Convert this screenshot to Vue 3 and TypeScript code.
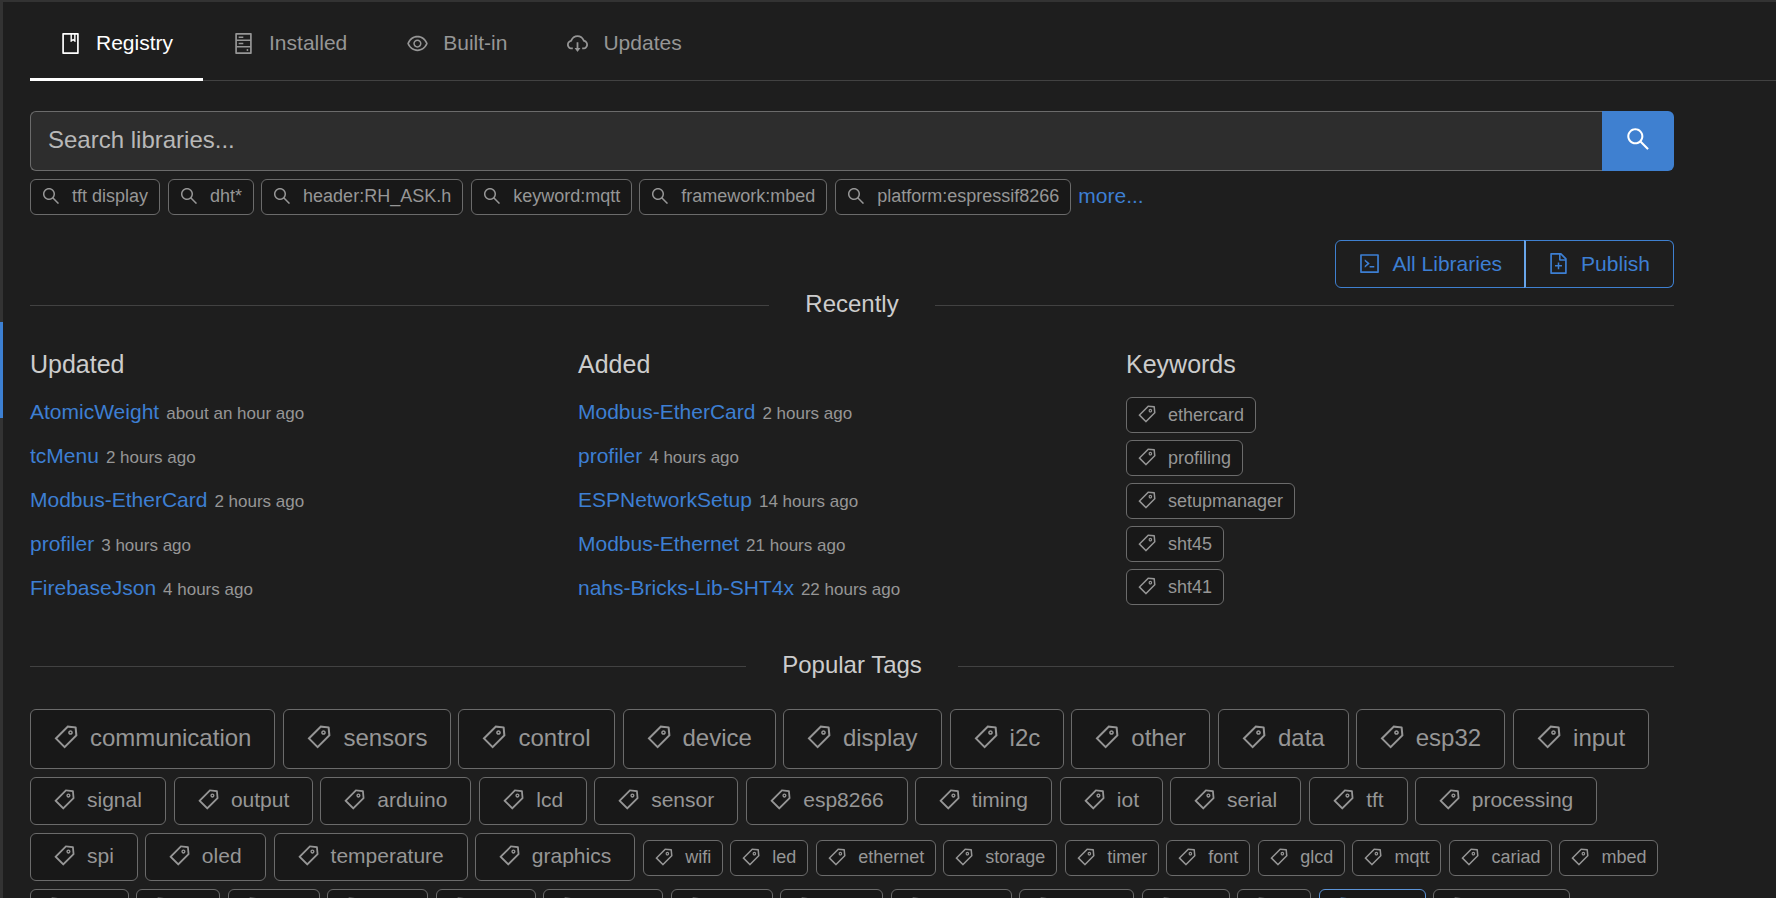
<script setup lang="ts">
import { h, ref, type FunctionalComponent } from 'vue'

const icons = {
  book: 'M832 64H192c-17.7 0-32 14.3-32 32v832c0 17.7 14.3 32 32 32h640c17.7 0 32-14.3 32-32V96c0-17.7-14.3-32-32-32zm-260 72h96v209.9L621.5 312 572 347.4V136zm220 752H232V136h280v296.9c0 3.3 1 6.6 3 9.3a15.9 15.9 0 0022.3 3.7l83.8-59.9 81.4 59.4c2.7 2 6 3.1 9.4 3.1 8.8 0 16-7.2 16-16V136h64v752z',
  hdd: 'M832 64H192c-17.7 0-32 14.3-32 32v832c0 17.7 14.3 32 32 32h640c17.7 0 32-14.3 32-32V96c0-17.7-14.3-32-32-32zm-600 72h560v208H232V136zm560 480H232V408h560v208zm0 272H232V680h560v208zM496 208H312c-4.4 0-8 3.6-8 8v48c0 4.4 3.6 8 8 8h184c4.4 0 8-3.6 8-8v-48c0-4.4-3.6-8-8-8zM312 544h184c4.4 0 8-3.6 8-8v-48c0-4.4-3.6-8-8-8H312c-4.4 0-8 3.6-8 8v48c0 4.4 3.6 8 8 8zm328 244a40 40 0 1080 0 40 40 0 10-80 0z',
  eye: 'M942.2 486.2C847.4 286.5 704.1 186 512 186c-192.2 0-335.4 100.5-430.2 300.3a60.3 60.3 0 000 51.5C176.6 737.5 319.9 838 512 838c192.2 0 335.4-100.5 430.2-300.3 7.7-16.2 7.7-35 0-51.5zM512 766c-161.3 0-279.4-81.8-362.7-254C232.6 339.8 350.7 258 512 258c161.3 0 279.4 81.8 362.7 254C791.5 684.2 673.4 766 512 766zm-4-430c-97.2 0-176 78.8-176 176s78.8 176 176 176 176-78.8 176-176-78.8-176-176-176zm0 288c-61.9 0-112-50.1-112-112s50.1-112 112-112 112 50.1 112 112-50.1 112-112 112z',
  cloud: 'M624 706.3h-74.1V464c0-4.4-3.6-8-8-8h-60c-4.4 0-8 3.6-8 8v242.3H400c-6.7 0-10.4 7.7-6.3 12.9l112 141.7a8 8 0 0012.6 0l112-141.7c4.1-5.2.4-12.9-6.3-12.9zM811.4 366.7C765.6 245.9 648.9 160 512.2 160S258.8 245.8 213 366.6C127.3 389.1 64 467.2 64 560c0 110.5 89.5 200 199.9 200H304c4.4 0 8-3.6 8-8v-60c0-4.4-3.6-8-8-8h-40.1c-33.7 0-65.4-13.4-89-37.7-23.5-24.2-36-56.8-34.9-90.6.9-26.4 9.9-51.2 26.2-72.1 16.7-21.3 40.1-36.8 66.1-43.7l37.9-9.9 13.9-36.6c8.6-22.8 20.6-44.1 35.7-63.4a245.6 245.6 0 0152.4-49.9c41.1-28.9 89.5-44.2 140-44.2s98.9 15.3 140 44.2c19.9 14 37.5 30.8 52.4 49.9 15.1 19.3 27.1 40.7 35.7 63.4l13.8 36.5 37.8 10C846.1 454.5 884 503.8 884 560c0 33.1-12.9 64.3-36.3 87.7a123.07 123.07 0 01-87.6 36.3H720c-4.4 0-8 3.6-8 8v60c0 4.4 3.6 8 8 8h40.1C870.5 760 960 670.5 960 560c0-92.7-63.1-170.7-148.6-193.3z',
  search: 'M909.6 854.5L649.9 594.8C690.2 542.7 712 479 712 412c0-80.2-31.3-155.4-87.9-212.1-56.6-56.7-132-87.9-212.1-87.9s-155.5 31.3-212.1 87.9C143.2 256.5 112 331.8 112 412c0 80.1 31.3 155.5 87.9 212.1C256.5 680.8 331.8 712 412 712c67 0 130.6-21.8 182.7-62l259.7 259.6a8.2 8.2 0 0011.6 0l43.6-43.5a8.2 8.2 0 000-11.6zM570.4 570.4C528 612.7 471.8 636 412 636s-116-23.3-158.4-65.6C211.3 528 188 471.8 188 412s23.3-116.1 65.6-158.4C296 211.3 352.2 188 412 188s116.1 23.2 158.4 65.6S636 352.2 636 412s-23.3 116.1-65.6 158.4z',
  tag: 'M938 458.8l-29.6-312.6c-1.5-16.2-14.4-29-30.6-30.6L565.2 86h-.4c-3.2 0-5.7 1-7.6 2.9L88.9 557.2a9.96 9.96 0 000 14.1l363.8 363.8c1.9 1.9 4.4 2.9 7.1 2.9s5.2-1 7.1-2.9l468.3-468.3c2-2.1 3-5 2.8-8zM459.7 834.7L189.3 564.3 589 164.6 836 188l23.4 247-399.7 399.7zM680 256c-48.5 0-88 39.5-88 88s39.5 88 88 88 88-39.5 88-88-39.5-88-88-88zm0 120c-17.7 0-32-14.3-32-32s14.3-32 32-32 32 14.3 32 32-14.3 32-32 32z',
  code: 'M516 673c0 4.4 3.4 8 7.5 8h185c4.1 0 7.5-3.6 7.5-8v-48c0-4.4-3.4-8-7.5-8h-185c-4.1 0-7.5 3.6-7.5 8v48zm-194.9 6.1l192-161c3.8-3.2 3.8-9.1 0-12.3l-192-160.9A7.95 7.95 0 00308 351v62.7c0 2.4 1 4.6 2.9 6.1L420.7 512l-109.8 92.2a8.1 8.1 0 00-2.9 6.1V673c0 6.8 7.9 10.5 13.1 6.1zM880 112H144c-17.7 0-32 14.3-32 32v736c0 17.7 14.3 32 32 32h736c17.7 0 32-14.3 32-32V144c0-17.7-14.3-32-32-32zm-40 728H184V184h656v656z',
  fileAdd: 'M854.6 288.6L639.4 73.4c-6-6-14.1-9.4-22.6-9.4H192c-17.7 0-32 14.3-32 32v832c0 17.7 14.3 32 32 32h640c17.7 0 32-14.3 32-32V311.3c0-8.5-3.4-16.7-9.4-22.7zM790.2 326H602V137.8L790.2 326zm1.8 562H232V136h302v216a42 42 0 0042 42h216v494zM544 472c0-4.4-3.6-8-8-8h-48c-4.4 0-8 3.6-8 8v108H372c-4.4 0-8 3.6-8 8v48c0 4.4 3.6 8 8 8h108v108c0 4.4 3.6 8 8 8h48c4.4 0 8-3.6 8-8V644h108c4.4 0 8-3.6 8-8v-48c0-4.4-3.6-8-8-8H544V472z',
}
type IconName = keyof typeof icons

const Icon: FunctionalComponent<{ name: IconName }> = (props) =>
  h(
    'svg',
    { viewBox: '64 64 896 896', width: '1em', height: '1em', fill: 'currentColor', 'aria-hidden': 'true' },
    [h('path', { d: icons[props.name] })],
  )
Icon.props = ['name']

const tabs: { label: string; icon: IconName }[] = [
  { label: 'Registry', icon: 'book' },
  { label: 'Installed', icon: 'hdd' },
  { label: 'Built-in', icon: 'eye' },
  { label: 'Updates', icon: 'cloud' },
]
const activeTab = ref('Registry')
const query = ref('')

const examples = [
  'tft display',
  'dht*',
  'header:RH_ASK.h',
  'keyword:mqtt',
  'framework:mbed',
  'platform:espressif8266',
]

const recent = [
  {
    title: 'Updated',
    items: [
      { name: 'AtomicWeight', time: 'about an hour ago' },
      { name: 'tcMenu', time: '2 hours ago' },
      { name: 'Modbus-EtherCard', time: '2 hours ago' },
      { name: 'profiler', time: '3 hours ago' },
      { name: 'FirebaseJson', time: '4 hours ago' },
    ],
  },
  {
    title: 'Added',
    items: [
      { name: 'Modbus-EtherCard', time: '2 hours ago' },
      { name: 'profiler', time: '4 hours ago' },
      { name: 'ESPNetworkSetup', time: '14 hours ago' },
      { name: 'Modbus-Ethernet', time: '21 hours ago' },
      { name: 'nahs-Bricks-Lib-SHT4x', time: '22 hours ago' },
    ],
  },
]
const keywords = ['ethercard', 'profiling', 'setupmanager', 'sht45', 'sht41']

const tagGroups = [
  {
    size: 'large',
    names: ['communication', 'sensors', 'control', 'device', 'display', 'i2c', 'other', 'data', 'esp32', 'input'],
  },
  {
    size: 'medium',
    names: [
      'signal', 'output', 'arduino', 'lcd', 'sensor', 'esp8266', 'timing', 'iot', 'serial', 'tft', 'processing',
      'spi', 'oled', 'temperature', 'graphics',
    ],
  },
  {
    size: 'small',
    names: ['wifi', 'led', 'ethernet', 'storage', 'timer', 'font', 'glcd', 'mqtt', 'cariad', 'mbed'],
  },
]
const tags = tagGroups.flatMap((g) => g.names.map((name) => ({ name, size: g.size })))

// Chips in the row that runs under the bottom edge of the panel.
const edgeChips = [99, 84, 92, 101, 100, 120, 102, 103, 121, 115, 88, 74, 107, 137]
const focusedEdgeChip = 12
</script>

<template>
  <div class="page">
    <div class="rail"><div class="rail-mark"></div></div>
    <div class="panel">
      <nav class="tabs">
        <button
          v-for="tab in tabs"
          :key="tab.label"
          type="button"
          class="tab"
          :class="{ active: tab.label === activeTab }"
          @click="activeTab = tab.label"
        >
          <Icon :name="tab.icon" />{{ tab.label }}
        </button>
      </nav>

      <main class="content">
        <form class="search" @submit.prevent>
          <input v-model="query" class="search-input" type="text" placeholder="Search libraries..." aria-label="Search libraries..." />
          <button class="search-button" type="submit"><Icon name="search" /></button>
        </form>

        <div class="examples">
          <button v-for="text in examples" :key="text" type="button" class="chip small"><Icon name="search" />{{ text }}</button>
          <a href="#" class="link">more...</a>
        </div>

        <div class="actions">
          <button type="button" class="action"><Icon name="code" />All Libraries</button>
          <button type="button" class="action"><Icon name="fileAdd" />Publish</button>
        </div>

        <h2 class="divider">Recently</h2>

        <div class="columns">
          <section v-for="column in recent" :key="column.title">
            <h3 class="title">{{ column.title }}</h3>
            <ul class="list">
              <li v-for="item in column.items" :key="item.name" class="entry">
                <a href="#" class="link">{{ item.name }}</a>
                <small class="time">{{ item.time }}</small>
              </li>
            </ul>
          </section>
          <section>
            <h3 class="title">Keywords</h3>
            <div class="keywords">
              <button v-for="word in keywords" :key="word" type="button" class="chip small"><Icon name="tag" />{{ word }}</button>
            </div>
          </section>
        </div>

        <h2 class="divider">Popular Tags</h2>

        <div class="tags">
          <button v-for="tag in tags" :key="tag.name" type="button" class="chip" :class="tag.size"><Icon name="tag" />{{ tag.name }}</button>
          <button
            v-for="(width, i) in edgeChips"
            :key="i"
            type="button"
            class="chip small"
            :class="{ focused: i === focusedEdgeChip }"
            :style="{ width: width + 'px' }"
          >
            <Icon name="tag" />
          </button>
        </div>
      </main>
    </div>
  </div>
</template>

<style>
body {
  margin: 0;
  background: #1e1e1e;
}
</style>

<style scoped>
.page {
  display: flex;
  box-sizing: border-box;
  height: 100vh;
  overflow: hidden;
  border-top: 2px solid #333333;
  background: #1e1e1e;
  color: #cccccc;
  font-family: "Liberation Sans", Arial, sans-serif;
  font-size: 21px;
}

.page *,
.page *::before,
.page *::after {
  box-sizing: border-box;
}

button,
input {
  margin: 0;
  font-family: inherit;
}

button {
  cursor: pointer;
}

svg {
  flex: none;
}

.rail {
  flex: none;
  width: 3px;
  padding-top: 320px;
  background: #333333;
}

.rail-mark {
  height: 96px;
  background: #3d80d3;
}

.panel {
  flex: 1;
  min-width: 0;
  padding-left: 27px;
}

.tabs {
  display: flex;
  border-bottom: 1px solid #424242;
}

.tab {
  display: flex;
  align-items: center;
  gap: 15px;
  height: 79px;
  margin-bottom: -1px;
  padding: 6px 30px 0;
  border: 0;
  border-bottom: 3px solid transparent;
  background: none;
  color: #969696;
  font-size: 21px;
}

.tab.active {
  border-bottom-color: #ffffff;
  color: #ffffff;
}

.content {
  margin: 30px 102px 0 0;
}

.search {
  display: flex;
  height: 60px;
}

.search-input {
  flex: 1;
  min-width: 0;
  padding: 0 17px 2px;
  border: 1px solid #6b6b6b;
  border-right: 0;
  border-radius: 6px 0 0 6px;
  outline: 0;
  background: #2d2d2d;
  color: #cccccc;
  font-size: 24px;
}

.search-input::placeholder {
  color: #b8b8b8;
  opacity: 1;
}

.search-button {
  display: flex;
  align-items: center;
  justify-content: center;
  width: 72px;
  padding: 0 0 4px;
  border: 0;
  border-radius: 0 6px 6px 0;
  background: #3f80d0;
  color: #ffffff;
  font-size: 24px;
}

.examples {
  display: flex;
  align-items: center;
  gap: 7px;
  margin-top: 8px;
}

.examples .link {
  padding-bottom: 2px;
}

.link {
  color: #3d7fd3;
  text-decoration: none;
}

.chip {
  display: flex;
  align-items: center;
  gap: 12px;
  border: 1px solid #6b6b6b;
  border-radius: 6px;
  background: #181818;
  color: #969696;
  white-space: nowrap;
}

.tags .chip svg,
.keywords .chip svg,
.action svg {
  margin-bottom: 2px;
}

.chip.small {
  height: 36px;
  padding: 0 11px;
  font-size: 18px;
}

.examples .chip.small {
  padding-bottom: 2px;
}

.examples .chip:nth-child(odd),
.tags .chip:nth-child(odd) {
  margin-right: 1px;
}

.chip.medium {
  height: 48px;
  padding: 0 23px 2px;
  font-size: 21px;
}

.chip.large {
  height: 60px;
  padding: 0 23px 2px;
  font-size: 24px;
}

.chip.focused {
  border-color: #5c93d6;
  color: #5c93d6;
}

.actions {
  display: flex;
  justify-content: flex-end;
  margin-top: 25px;
}

.action {
  display: flex;
  align-items: center;
  gap: 12px;
  height: 48px;
  padding: 0 23px;
  border: 1px solid #3f80d0;
  border-radius: 6px 0 0 6px;
  background: none;
  color: #3d7fd3;
  font-size: 21px;
}

.action + .action {
  margin-left: -2px;
  padding-left: 22px;
  border-left: 2px solid #68a5ea;
  border-radius: 0 6px 6px 0;
}

.divider {
  display: flex;
  align-items: center;
  gap: 36px;
  margin: 0;
  font-size: 24px;
  font-weight: 400;
  line-height: 32px;
}

.divider::before,
.divider::after {
  content: "";
  flex: 1;
  margin-top: 2px;
  border-top: 1px solid #424242;
}

.columns {
  display: grid;
  grid-template-columns: repeat(3, 1fr);
  margin: 28px 0 39px;
}

.title {
  margin: 0;
  font-size: 25px;
  font-weight: 400;
  line-height: 32px;
}

.list {
  margin: 10px 0 0;
  padding: 0;
  list-style: none;
}

.entry {
  display: flex;
  align-items: baseline;
  gap: 7px;
  line-height: 44px;
}

.time {
  color: #969696;
  font-size: 17px;
  line-height: 20px;
}

.keywords {
  display: flex;
  flex-direction: column;
  align-items: flex-start;
  gap: 7px;
  margin-top: 17px;
}

.tags {
  display: flex;
  flex-wrap: wrap;
  align-items: baseline;
  gap: 8px 7px;
  margin-top: 28px;
}
</style>
